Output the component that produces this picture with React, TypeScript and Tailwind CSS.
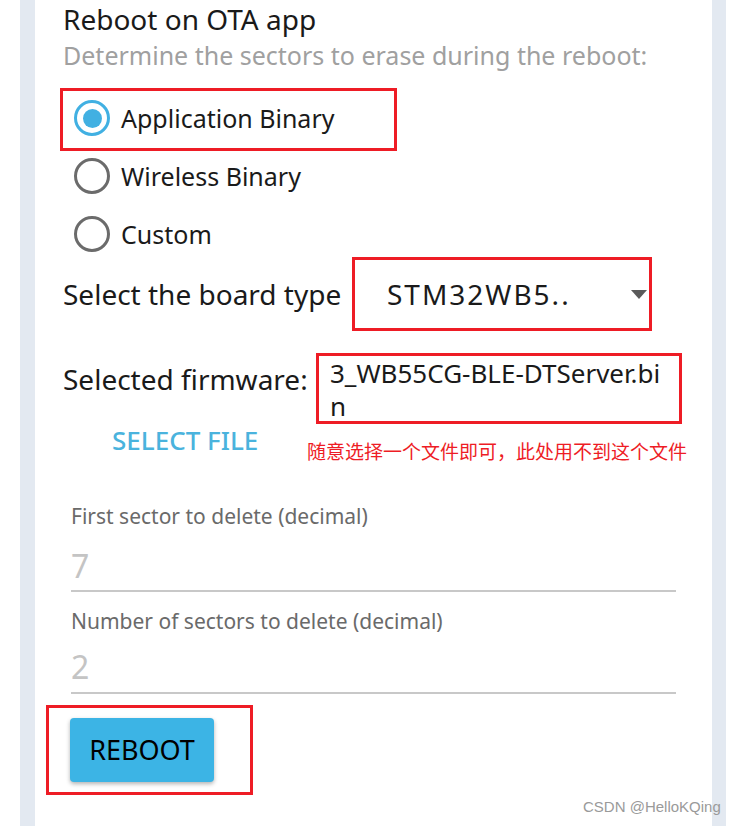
import React from "react";

const font = { fontFamily: "'Noto Sans', 'Noto Sans CJK SC', sans-serif" } as React.CSSProperties;

function Radio({ checked, label }: { checked?: boolean; label: string }) {
  return (
    <div className="flex items-center h-[58px]">
      <div className="w-[58px] flex justify-center">
        {checked ? (
          <div className="w-[36px] h-[36px] rounded-full border-[3px] border-[#41b0e2] flex items-center justify-center">
            <div className="w-[19px] h-[19px] rounded-full bg-[#41b0e2]" />
          </div>
        ) : (
          <div className="w-[36px] h-[36px] rounded-full border-[3px] border-[#6b6b6b]" />
        )}
      </div>
      <span className="text-[25px] text-[#1a1a1a] leading-none">{label}</span>
    </div>
  );
}

export default function App() {
  return (
    <div className="w-[735px] h-[826px] bg-white overflow-hidden relative" style={font}>
      <div className="absolute left-[20px] top-0 w-[15px] h-full bg-[#e3e9f1]" />
      <div className="absolute left-[712px] top-0 w-[14px] h-full bg-[#e3e9f1]" />
      <div className="ml-[35px] w-[677px] h-full flex flex-col">
        <div className="pl-[28px] pt-[2px] text-[28px] text-[#1a1a1a] leading-[34px]">Reboot on OTA app</div>
        <div className="pl-[28px] pt-[2px] text-[25px] text-[#a0a0a0] leading-[34px]">Determine the sectors to erase during the reboot:</div>
        <div className="mt-[17px] pl-[28px] flex flex-col">
          <div className="relative">
            <div className="absolute left-[-3px] top-[-1px] w-[337px] h-[63px] border-[3px] border-[#ee1c25]" />
            <Radio checked label="Application Binary" />
          </div>
          <Radio label="Wireless Binary" />
          <Radio label="Custom" />
        </div>
        <div className="pl-[28px] mt-[-6px] flex items-center h-[74px]">
          <div className="w-[289px] text-[28px] text-[#1a1a1a] whitespace-nowrap">Select the board type</div>
          <div className="w-[300px] h-[74px] border-[3px] border-[#ee1c25] flex items-center justify-between pl-[32px] pr-[2px]">
            <span className="text-[28px] text-[#1a1a1a] tracking-[2px]">STM32WB5..</span>
            <svg width="16" height="9" viewBox="0 0 16 9"><path d="M0 0 L16 0 L8 9 Z" fill="#5a5a5a" /></svg>
          </div>
        </div>
        <div className="pl-[28px] mt-[22px] flex items-start">
          <span className="text-[28px] text-[#1a1a1a] w-[253px] mt-[5px] whitespace-nowrap">Selected firmware:</span>
          <div className="w-[366px] h-[71px] border-[3px] border-[#ee1c25] pl-[11px] pt-[1px] text-[26px] leading-[33px] text-[#1a1a1a] whitespace-nowrap">
            <div>3_WB55CG-BLE-DTServer.bi</div>
            <div>n</div>
          </div>
        </div>
        <div className="flex items-start">
          <div className="ml-[77px] mt-[0px] text-[26px] font-medium text-[#4ab3dd] leading-[32px]">SELECT FILE</div>
        </div>
        <div className="ml-[272px] mt-[-18px] text-[19px] leading-[26px] text-[#ee1c25]" style={{ fontFamily: "'Noto Sans CJK SC', sans-serif" }}>随意选择一个文件即可，此处用不到这个文件</div>
        <div className="pl-[36px] pr-[36px] mt-[38px]">
          <div className="text-[21px] text-[#6a6a6a] leading-[28px]">First sector to delete (decimal)</div>
          <div className="mt-[18px] text-[32px] text-[#c4c4c4] leading-[36px] h-[42px]">7</div>
          <div className="h-[2px] bg-[#c8c8c8]" />
          <div className="mt-[15px] text-[21px] text-[#6a6a6a] leading-[28px]">Number of sectors to delete (decimal)</div>
          <div className="mt-[14px] text-[32px] text-[#c4c4c4] leading-[36px] h-[43px]">2</div>
          <div className="h-[2px] bg-[#c8c8c8]" />
        </div>
        <div className="ml-[11px] mt-[11px] w-[207px] h-[90px] border-[3px] border-[#ee1c25] pl-[21px] pt-[10px]">
          <div className="w-[144px] h-[64px] rounded-[4px] bg-[#3cb4e5] flex items-center justify-center text-[27px] text-black shadow-[0_2px_4px_rgba(0,0,0,0.3)]">REBOOT</div>
        </div>
      </div>
      <div className="absolute left-[583px] top-[796px] text-[15px] text-[#9a9a9a]" style={{ fontFamily: "'Liberation Sans', sans-serif" }}>CSDN @HelloKQing</div>
    </div>
  );
}
